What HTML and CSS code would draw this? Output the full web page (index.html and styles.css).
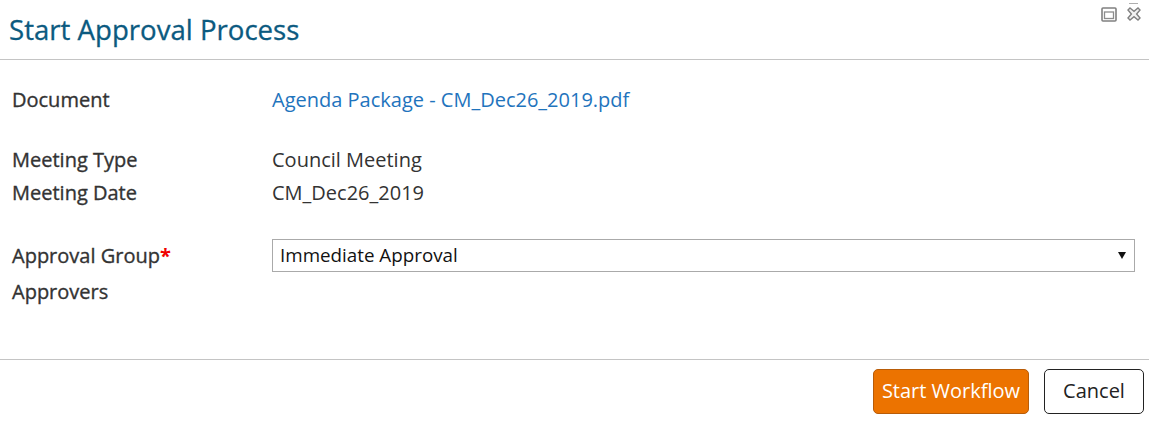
FILE: index.html
```html
<!DOCTYPE html>
<html lang="en">

<head>
    <meta charset="UTF-8" />
    <meta name="viewport" content="width=device-width, initial-scale=1.0" />
    <title>Start Approval Process</title>
    <link rel="stylesheet" href="styles.css">
</head>

<body>
    <div class="dialog">
        <div class="window-icons">
            <svg width="16" height="15" viewBox="0 0 16 15" class="icon-max">
                <rect x="1" y="1" width="14" height="13" rx="1" fill="none" stroke="#808080" stroke-width="1.6" />
                <rect x="3.5" y="5" width="9" height="6.5" fill="none" stroke="#8c8c8c" stroke-width="1.3" />
            </svg>
            <svg width="14" height="18" viewBox="0 0 14 18" class="icon-close">
                <path d="M2 0.5 H11" stroke="#999" stroke-width="0.8" />
                <path d="M3 5 L7 8.4 L11 5 L13 7 L9.6 11 L13 15 L11 17 L7 13.6 L3 17 L1 15 L4.4 11 L1 7 Z" fill="#f2f2f2" stroke="#808080" stroke-width="1.4" />
            </svg>
        </div>
        <div class="dialog-header">
            <h1>Start Approval Process</h1>
        </div>
        <div class="dialog-body">
            <div class="row row-document">
                <div class="label">Document</div>
                <div class="value"><a href="#">Agenda Package - CM_Dec26_2019.pdf</a></div>
            </div>
            <div class="row row-type">
                <div class="label">Meeting Type</div>
                <div class="value">Council Meeting</div>
            </div>
            <div class="row row-date">
                <div class="label">Meeting Date</div>
                <div class="value">CM_Dec26_2019</div>
            </div>
            <div class="row row-group">
                <div class="label">Approval Group<span class="required">*</span></div>
                <div class="select-box">
                    <span>Immediate Approval</span>
                    <span class="arrow"></span>
                </div>
            </div>
            <div class="row row-approvers">
                <div class="label">Approvers</div>
            </div>
        </div>
        <div class="dialog-footer">
            <button class="btn-start" type="button">Start Workflow</button>
            <button class="btn-cancel" type="button">Cancel</button>
        </div>
    </div>
</body>

</html>
```

FILE: styles.css
```css
html,
body {
    margin: 0;
    height: 421px;
    overflow: hidden;
    background-color: white;
}

body {
    font-family: "Open Sans", sans-serif;
    font-size: 20px;
    color: #333;
}

.dialog {
    position: relative;
    display: flex;
    flex-direction: column;
    height: 421px;
}

.window-icons {
    position: absolute;
    top: 3px;
    right: 8px;
    display: flex;
    gap: 10px;
    align-items: flex-start;
}

.window-icons svg {
    display: block;
}

.icon-max {
    margin-top: 4px;
}

.dialog-header {
    height: 59px;
    border-bottom: 1px solid #c4c4c4;
    padding-left: 9px;
}

.dialog-header h1 {
    margin: 0;
    padding-top: 10px;
    font-size: 27.6px;
    line-height: 38px;
    font-weight: 400;
    color: #0b5a80;
    -webkit-text-stroke: 0.3px #0b5a80;
}

.dialog-body {
    height: 299px;
    padding-left: 12px;
    padding-right: 14px;
    border-bottom: 1px solid #c4c4c4;
}

.row {
    display: flex;
    align-items: flex-start;
}

.label {
    width: 260px;
    flex-shrink: 0;
    font-weight: 400;
    color: #333;
    line-height: 26px;
    -webkit-text-stroke: 0.35px #333;
}

.value {
    line-height: 26px;
}

.value a {
    color: #1f74bd;
    text-decoration: none;
}

.row-document {
    padding-top: 27px;
}

.row-type {
    padding-top: 34px;
}

.row-date {
    padding-top: 7px;
}

.row-group {
    padding-top: 33px;
}

.row-group .label {
    padding-top: 4px;
}

.row-approvers {
    padding-top: 7px;
}

.required {
    color: #f00000;
    font-weight: 700;
    -webkit-text-stroke: 0;
}

.select-box {
    flex: 1;
    height: 31px;
    border: 1px solid #aaa;
    padding: 0 7px;
    display: flex;
    justify-content: space-between;
    align-items: center;
    font-size: 18.8px;
    color: #111;
}

.select-box span:first-child {
    margin-bottom: 2px;
}

.arrow {
    width: 0;
    height: 0;
    border-left: 4px solid transparent;
    border-right: 4px solid transparent;
    border-top: 7px solid #111;
    margin-right: 1px;
}

.dialog-footer {
    display: flex;
    justify-content: flex-end;
    gap: 15px;
    padding-top: 9px;
    padding-right: 5px;
}

.dialog-footer button {
    height: 45px;
    border-radius: 5px;
    font-family: "Open Sans", sans-serif;
    font-size: 20px;
    padding: 0 0 2px;
    cursor: pointer;
}

.btn-start {
    width: 156px;
    background-color: #ec7300;
    border: 1px solid #b85c08;
    color: white;
}

.btn-cancel {
    width: 100px;
    background-color: white;
    border: 1px solid #222;
    color: #222;
}
```
